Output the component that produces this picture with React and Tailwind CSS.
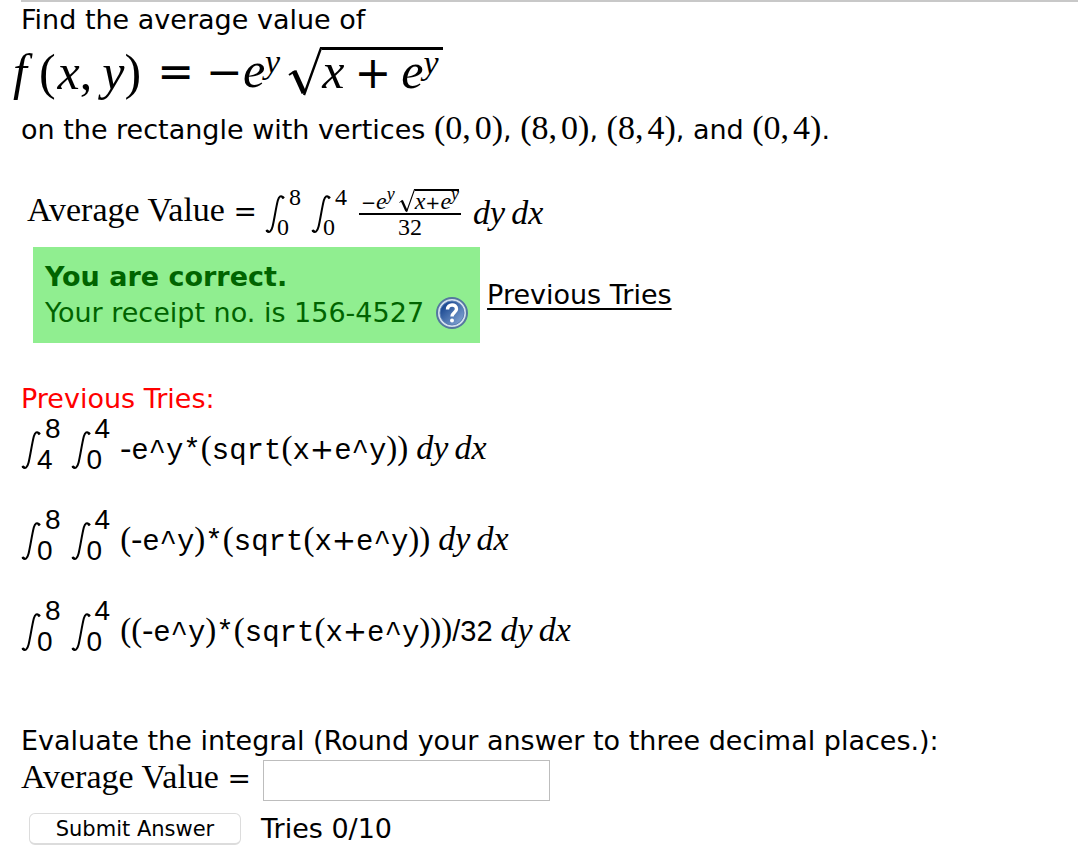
import React, { useState } from 'react';

const previousTries = [
  { id: 1, upper: '8', lower: '4', body: '-e^y*(sqrt(x+e^y))' },
  { id: 2, upper: '8', lower: '0', body: '(-e^y)*(sqrt(x+e^y))' },
  { id: 3, upper: '8', lower: '0', body: '((-e^y)*(sqrt(x+e^y)))/32' }
];

const Serif = ({ className = '', children }) => (
  <span className={`font-['Liberation_Serif',serif] text-[34px] leading-9 ${className}`}>{children}</span>
);

const Op = ({ className = 'text-[28px]', children }) => (
  <span className={`font-['DejaVu_Sans',sans-serif] leading-none ${className}`}>{children}</span>
);

const Point = ({ x, y }) => (
  <Serif>({x},<span className="pl-1">{y})</span></Serif>
);

const IntegralSign = () => (
  <svg viewBox="0 0 20 40" className="h-10 w-5 shrink-0" fill="none" stroke="currentColor" strokeLinecap="round">
    <path d="M18.4 3.4C16.2 1 14 2.2 12.8 6.5C11 13.5 9.3 25.5 7.6 32.5C6.3 37.6 4.2 39.3 1.8 37" strokeWidth="2" />
    <circle cx="17.8" cy="3.6" r="0.9" fill="currentColor" strokeWidth="1" />
    <circle cx="2.2" cy="36.8" r="0.9" fill="currentColor" strokeWidth="1" />
  </svg>
);

const Integral = ({ upper, lower }) => (
  <span className="flex items-center">
    <IntegralSign />
    <span className="mb-1 flex h-[50px] flex-col justify-between font-['Liberation_Serif',serif] text-2xl leading-5">
      <span className="pl-1">{upper}</span>
      <span className="-ml-2">{lower}</span>
    </span>
  </span>
);

const TryIntegral = ({ upper, lower }) => (
  <span className="flex items-center">
    <IntegralSign />
    <span className="mb-2.5 flex h-[55px] flex-col justify-between font-['Liberation_Sans',sans-serif] text-[28px] leading-6">
      <span className="pl-1">{upper}</span>
      <span className="-ml-1">{lower}</span>
    </span>
  </span>
);

const Radical = ({ small, children }) => (
  <span className="flex items-stretch">
    <svg
      viewBox="0 0 34 50"
      preserveAspectRatio="none"
      className={small ? 'h-6 w-4' : 'h-[50px] w-[34px]'}
      fill="none"
      stroke="currentColor"
    >
      <path d="M1 28L7 24" strokeWidth="2" />
      <path d="M6 24L16 46" strokeWidth="5" />
      <path d="M16 48L33 1H34" strokeWidth="2.4" />
    </svg>
    <span className={small ? 'border-t-2 border-black leading-5' : 'border-t-[3px] border-black pr-1 leading-[42px]'}>
      {children}
    </span>
  </span>
);

// Letters are typewriter, brackets and the minus sign are serif, numbers are sans
const TypedAnswer = ({ text }) => (
  <span className="text-[29px] leading-9 whitespace-nowrap">
    {text.split(/([a-z^*]+|[()-]+|[+]|[/\d]+)/).filter(Boolean).map((part, i) => {
      let font = "font-['Liberation_Mono',monospace]";
      if (/^[()-]/.test(part)) font = "font-['Liberation_Serif',serif] text-[33px]";
      if (/^[+]/.test(part)) font = "font-['DejaVu_Sans',sans-serif]";
      if (/^[/\d]/.test(part)) font = "font-['Liberation_Sans',sans-serif]";
      return <span key={i} className={font}>{part}</span>;
    })}
  </span>
);

const Differentials = () => (
  <Serif className="italic">
    dy<span className="pl-1.5">dx</span>
  </Serif>
);

const HelpIcon = () => (
  <svg viewBox="0 0 32 32" className="h-8 w-8">
    <defs>
      <linearGradient id="help" x1="0" y1="0" x2="1" y2="1">
        <stop offset="0.2" stopColor="#1f4c94" />
        <stop offset="1" stopColor="#8fb0dc" />
      </linearGradient>
    </defs>
    <circle cx="16" cy="16" r="15" fill="#d3dfee" stroke="#54779f" strokeWidth="2" />
    <circle cx="16" cy="16" r="12" fill="url(#help)" stroke="#5b80b5" strokeWidth="1" />
    <path d="M11.5 12.5C11.5 6.5 20.5 6.5 20.5 12C20.5 15.5 16 15.5 16 19.5" fill="none" stroke="#fff" strokeWidth="3.4" />
    <circle cx="16" cy="23.5" r="2" fill="#fff" />
  </svg>
);

const App = () => {
  const [answer, setAnswer] = useState('');

  return (
    <main className="min-h-screen bg-white pl-[21px] font-['DejaVu_Sans',Verdana,sans-serif] text-[27px] leading-9 text-black">
      <div className="border-t-2 border-[#c8c8c8]">
        <p>Find the average value of</p>

        <div className="-ml-2 flex h-[72px] items-center pb-1 font-['Liberation_Serif',serif] text-[50px] whitespace-nowrap">
          <span><i className="pr-3">f</i>(<i className="pl-0.5">x</i>,<i className="pl-2.5">y</i>)</span>
          <Op className="pl-4 text-[44px]">=</Op>
          <span className="pl-3"><Op className="text-[44px]">−</Op><i>e<sup className="-top-3.5 text-[34px]">y</sup></i></span>
          <span className="pl-2">
            <Radical>
              <i>x</i><Op className="px-2.5 text-[44px]">+</Op><i>e<sup className="-top-3.5 text-[34px]">y</sup></i>
            </Radical>
          </span>
        </div>

        <p className="leading-[38px]">
          on the rectangle with vertices <Point x="0" y="0" />, <Point x="8" y="0" />, <Point x="8" y="4" />, and{' '}
          <Point x="0" y="4" />.
        </p>

        <div className="mt-8 flex h-[66px] items-center pl-1.5">
          <Serif className="pb-2">Average Value <Op>=</Op></Serif>
          <span className="flex gap-2.5 pl-2">
            <Integral upper="8" lower="0" />
            <Integral upper="4" lower="0" />
          </span>
          <span className="ml-3 flex flex-col items-center font-['Liberation_Serif',serif] text-2xl leading-6">
            <span className="flex items-center border-b-2 border-black px-0.5">
              <span><Op className="text-lg">−</Op><i>e<sup className="text-lg leading-none">y</sup></i></span>
              <span className="pl-1">
                <Radical small>
                  <i>x</i><Op className="text-lg">+</Op><i>e<sup className="text-lg leading-none">y</sup></i>
                </Radical>
              </span>
            </span>
            <span>32</span>
          </span>
          <span className="pl-3"><Differentials /></span>
        </div>

        <div className="flex items-center gap-[7px] pl-3">
          <div className="bg-[#90ee90] px-3 py-3 text-[#006400]">
            <p className="font-bold">You are correct.</p>
            <p className="flex items-center gap-3">
              Your receipt no. is 156-4527
              <button type="button" aria-label="Help"><HelpIcon /></button>
            </p>
          </div>
          <a href="#previous-tries" className="underline underline-offset-4">Previous Tries</a>
        </div>

        <section id="previous-tries" className="mt-9">
          <h2 className="leading-10 text-[#ff0000]">Previous Tries:</h2>
          <div className="flex flex-col gap-8 pt-px">
            {previousTries.map((item) => (
              <div key={item.id} className="flex h-[59px] items-center">
                <span className="flex gap-2.5">
                  <TryIntegral upper={item.upper} lower={item.lower} />
                  <TryIntegral upper="4" lower="0" />
                </span>
                <span className="flex items-baseline gap-2 pl-2.5">
                  <TypedAnswer text={item.body} />
                  <Differentials />
                </span>
              </div>
            ))}
          </div>
        </section>

        <form className="mt-[62px]" onSubmit={(e) => e.preventDefault()}>
          <p>Evaluate the integral (Round your answer to three decimal places.):</p>
          <div className="flex items-center gap-3">
            <label htmlFor="answer" className="pb-1"><Serif>Average Value <Op>=</Op></Serif></label>
            <input
              id="answer"
              type="text"
              value={answer}
              onChange={(e) => setAnswer(e.target.value)}
              className="h-[41px] w-[287px] border border-[#bdbdbd] px-2"
            />
          </div>
          <div className="mt-2.5 flex items-center gap-5 pl-2">
            <button
              type="submit"
              className="h-8 w-[212px] rounded-md border border-b-2 border-[#dcdcdc] bg-white text-[21px] leading-7"
            >
              Submit Answer
            </button>
            <span>Tries 0/10</span>
          </div>
        </form>
      </div>
    </main>
  );
};

export default App;
